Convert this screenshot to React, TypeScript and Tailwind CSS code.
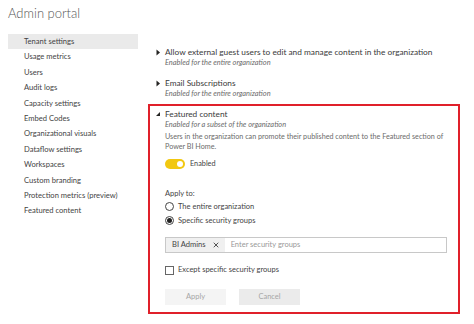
import { X } from "lucide-react"

const nav = [
  "Tenant settings",
  "Usage metrics",
  "Users",
  "Audit logs",
  "Capacity settings",
  "Embed Codes",
  "Organizational visuals",
  "Dataflow settings",
  "Workspaces",
  "Custom branding",
  "Protection metrics (preview)",
  "Featured content",
]

function Caret({ open }: { open?: boolean }) {
  return open ? (
    <svg width="6" height="6" viewBox="0 0 6 6" className="shrink-0">
      <path d="M5 1 L5 5 L1 5 Z" fill="#252423" />
    </svg>
  ) : (
    <svg width="6" height="7" viewBox="0 0 6 7" className="shrink-0">
      <path d="M1.5 0.5 L5 3.5 L1.5 6.5 Z" fill="#252423" />
    </svg>
  )
}

function Setting({ title, sub }: { title: string; sub: string }) {
  return (
    <div>
      <div className="flex items-center gap-[4px] h-[12px] text-[8.3px] text-[#3a3a3a] whitespace-nowrap">
        <div className="w-[6px] flex justify-center">
          <Caret />
        </div>
        <span>{title}</span>
      </div>
      <div className="pl-[10px] h-[10px] leading-[10px] text-[7.4px] italic text-[#6b6b6b] whitespace-nowrap">
        {sub}
      </div>
    </div>
  )
}

export default function App() {
  return (
    <div
      className="w-[474px] h-[324px] bg-white overflow-hidden"
      style={{ fontFamily: 'Lato, "Noto Sans", sans-serif' }}
    >
      <div className="pl-[8px] pt-[3px] h-[34px] text-[13px] font-light text-[#555] leading-[20px]">
        Admin portal
      </div>
      <div className="flex">
        {/* Sidebar */}
        <div className="ml-[8px] w-[130px]">
          {nav.map((item, i) => (
            <div
              key={item}
              className={`pl-[16px] h-[15.4px] leading-[15.4px] text-[7.6px] text-[#444] ${
                i === 0 ? "bg-[#eaeaea]" : ""
              }`}
            >
              {item}
            </div>
          ))}
        </div>

        {/* Main */}
        <div className="ml-[10px] w-[312px] pt-[12px]">
          <div className="pl-[7px]">
            <Setting
              title="Allow external guest users to edit and manage content in the organization"
              sub="Enabled for the entire organization"
            />
            <div className="mt-[9px]">
              <Setting title="Email Subscriptions" sub="Enabled for the entire organization" />
            </div>
          </div>

          <div className="mt-[5px] h-[210px] border-[2px] border-[#e0202a] pl-[5px] pt-[2px]">
            <div className="flex items-center gap-[4px] h-[12px] text-[8.3px] text-[#3a3a3a]">
              <div className="w-[6px] flex justify-center">
                <Caret open />
              </div>
              <span>Featured content</span>
            </div>
            <div className="pl-[10px]">
              <div className="h-[9px] leading-[9px] text-[7.4px] italic text-[#6b6b6b] whitespace-nowrap">
                Enabled for a subset of the organization
              </div>
              <div className="mt-[3px] pr-[8px] leading-[10px] text-[7.2px] text-[#6b6b6b]">
                Users in the organization can promote their published content to the Featured section of Power BI Home.
              </div>

              <div className="mt-[7px] h-[10px] flex items-center gap-[5px]">
                <div className="w-[20px] h-[10px] rounded-full bg-[#f2c811] flex items-center justify-end pr-[2px]">
                  <div className="w-[6px] h-[6px] rounded-full bg-white" />
                </div>
                <span className="text-[7.3px] text-[#444]">Enabled</span>
              </div>

              <div className="mt-[20px] h-[10px] leading-[10px] text-[7.5px] text-[#444]">Apply to:</div>
              <div className="mt-[1px]">
                <div className="h-[13.5px] flex items-center gap-[4px] text-[7.5px] text-[#444]">
                  <div className="w-[9px] h-[9px] rounded-full border border-[#444]" />
                  <span>The entire organization</span>
                </div>
                <div className="h-[13.5px] flex items-center gap-[4px] text-[7.5px] text-[#444]">
                  <div className="w-[9px] h-[9px] rounded-full border border-[#444] flex items-center justify-center">
                    <div className="w-[5px] h-[5px] rounded-full bg-[#222]" />
                  </div>
                  <span>Specific security groups</span>
                </div>
              </div>

              <div className="mt-[10px] mr-[11px] h-[16px] border border-[#c8c8c8] flex items-center gap-[6px]">
                <div className="h-full flex items-center gap-[6px] bg-[#f0f0f0] pl-[6px] pr-[5px] text-[7.6px] text-[#444]">
                  <span>BI Admins</span>
                  <X size={8} strokeWidth={2.5} color="#333" />
                </div>
                <span className="text-[7.5px] text-[#999]">Enter security groups</span>
              </div>

              <div className="mt-[11px] h-[12px] flex items-center gap-[4px] text-[7.5px] text-[#444]">
                <div className="w-[9px] h-[9px] border border-[#666]" />
                <span>Except specific security groups</span>
              </div>

              <div className="mt-[13px] flex gap-[13px]">
                <div className="w-[61px] h-[16px] bg-[#f4f4f4] flex items-center justify-center text-[7.5px] text-[#a6a6a6]">
                  Apply
                </div>
                <div className="w-[61px] h-[16px] bg-[#ebebeb] flex items-center justify-center text-[7.5px] text-[#a6a6a6]">
                  Cancel
                </div>
              </div>
            </div>
          </div>
        </div>
      </div>
    </div>
  )
}
